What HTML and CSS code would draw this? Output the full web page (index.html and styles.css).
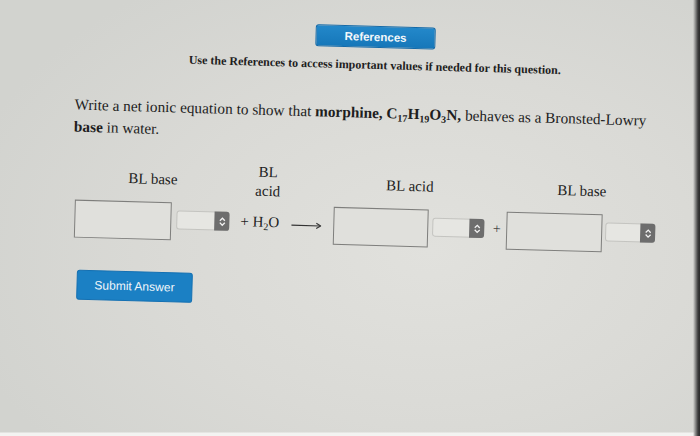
FILE: index.html
```html
<!DOCTYPE html>
<html>
<head>
<meta charset="utf-8">
<link rel="stylesheet" href="styles.css">
</head>
<body>
<div class="page">
  <div class="top">
    <button class="ref-btn">References</button>
    <p class="hint">Use the References to access important values if needed for this question.</p>
  </div>
  <p class="question">Write a net ionic equation to show that <b>morphine, C<sub>17</sub>H<sub>19</sub>O<sub>3</sub>N,</b> behaves as a Bronsted-Lowry<br><b>base</b> in water.</p>

  <div class="equation">
    <div class="col col-g1">
      <div class="label">BL base</div>
      <div class="slot">
        <span class="box box-a"></span>
        <span class="sel sel-a"><span class="step"><svg width="8" height="10" viewBox="0 0 8 10"><path d="M1.5 4 L4 1.5 L6.5 4 M1.5 6 L4 8.5 L6.5 6" fill="none" stroke="#f2f2f2" stroke-width="1.3"/></svg></span></span>
      </div>
    </div>
    <div class="col col-w">
      <div class="label">BL<br>acid</div>
      <div class="slot"><span class="txt">+ H<sub>2</sub>O</span></div>
    </div>
    <div class="col col-arrow">
      <div class="label"></div>
      <div class="slot"><svg class="arrow" width="30" height="8" viewBox="0 0 30 8"><path d="M0 4.5 H28.5" stroke="#333" stroke-width="1.1"/><path d="M25 1.8 L29.5 4.5 L25 7.2" fill="none" stroke="#333" stroke-width="1.1"/></svg></div>
    </div>
    <div class="col col-g2">
      <div class="label">BL acid</div>
      <div class="slot">
        <span class="box box-b"></span>
        <span class="sel sel-b"><span class="step"><svg width="8" height="10" viewBox="0 0 8 10"><path d="M1.5 4 L4 1.5 L6.5 4 M1.5 6 L4 8.5 L6.5 6" fill="none" stroke="#f2f2f2" stroke-width="1.3"/></svg></span></span>
      </div>
    </div>
    <div class="col col-plus">
      <div class="label"></div>
      <div class="slot"><span class="txt plus">+</span></div>
    </div>
    <div class="col col-g3">
      <div class="label">BL base</div>
      <div class="slot">
        <span class="box box-c"></span>
        <span class="sel sel-c"><span class="step"><svg width="8" height="10" viewBox="0 0 8 10"><path d="M1.5 4 L4 1.5 L6.5 4 M1.5 6 L4 8.5 L6.5 6" fill="none" stroke="#f2f2f2" stroke-width="1.3"/></svg></span></span>
      </div>
    </div>
  </div>

  <button class="submit">Submit Answer</button>
</div>
</body>
</html>
```
FILE: styles.css
```css
html, body {
  margin: 0;
  padding: 0;
  width: 700px;
  height: 436px;
  overflow: hidden;
}
body {
  background:
    linear-gradient(to right, rgba(0,0,0,0) 693px, #9a9a98 695px, #3c3c3c 698px, #2a2a2a 700px),
    linear-gradient(to bottom, rgba(0,0,0,0) 432px, #f3f3f1 433px),
    radial-gradient(ellipse 480px 320px at 430px 250px, #e1e1dd 0%, #dadad6 55%, #d2d3cf 100%);
  background-color: #d6d7d3;
  font-family: "Liberation Serif", "Times New Roman", serif;
  color: #1e1e1e;
}
.page {
  width: 700px;
  height: 436px;
  box-sizing: border-box;
  padding-top: 26px;
  transform: rotate(1.6deg);
  transform-origin: 375px 200px;
}
.top {
  display: flex;
  flex-direction: column;
  align-items: center;
  padding-left: 42px;
}
.ref-btn {
  width: 120px;
  height: 22px;
  margin: 0;
  border: 1px solid #146aa8;
  border-radius: 3px;
  background: linear-gradient(#2388ca, #1677b9);
  color: #f4f8fb;
  font-family: "Liberation Sans", Arial, sans-serif;
  font-weight: bold;
  font-size: 11.5px;
  padding: 0;
}
.hint {
  margin: 10px 0 0 0;
  font-size: 12px;
  font-weight: bold;
  line-height: 14px;
  white-space: nowrap;
}
.question {
  margin: 30px 0 0 72px;
  font-size: 15.3px;
  line-height: 22px;
}
.question sub {
  font-size: 10px;
  line-height: 0;
  vertical-align: -3px;
}
.equation {
  display: flex;
  margin: 16px 0 0 75px;
}
.col {
  display: flex;
  flex-direction: column;
  align-items: center;
}
.label {
  height: 46px;
  display: flex;
  align-items: center;
  justify-content: center;
  text-align: center;
  font-size: 15px;
  line-height: 19px;
}
.slot {
  height: 38px;
  display: flex;
  align-items: center;
}
.col-g1 { width: 155px; margin-right: 8px; }
.col-w { width: 45px; margin-right: 9px; }
.col-arrow { width: 30px; margin-right: 12px; }
.col-g2 { width: 151px; margin-right: 9px; }
.col-plus { width: 7px; margin-right: 6px; }
.col-g3 { width: 149px; }
.col-w .label { padding-left: 14px; }
.box {
  display: block;
  height: 38px;
  box-sizing: border-box;
  border: 1.5px solid #7e7e7c;
  background: #e0e0dc;
}
.box-a { width: 97px; margin-right: 5px; }
.box-b { width: 95px; margin-right: 4px; }
.box-c { width: 96px; margin-right: 3px; }
.sel {
  display: flex;
  justify-content: flex-end;
  height: 19px;
  box-sizing: border-box;
  border: 1px solid #c4c4c0;
  border-radius: 3px;
  background: #e6e6e2;
  margin-top: -3px;
}
.sel-a { width: 53px; }
.sel-b { width: 52px; }
.sel-c { width: 50px; }
.step {
  width: 15px;
  height: 19px;
  margin: -1px -1px 0 0;
  border-radius: 0 3px 3px 0;
  background: #6d6d6d;
  display: flex;
  align-items: center;
  justify-content: center;
}
.txt {
  font-size: 15px;
  white-space: nowrap;
  margin-top: -4px;
}
.txt sub {
  font-size: 10px;
  line-height: 0;
  vertical-align: -3px;
}
.plus { font-size: 14px; color: #444; margin-top: -2px; }
.arrow { display: block; margin-top: -1px; }
.submit {
  display: block;
  margin: 32px 0 0 79px;
  width: 116px;
  height: 30px;
  border: 1px solid #1470b2;
  border-radius: 3px;
  background: #1b80c4;
  color: #f1f6fa;
  font-family: "Liberation Sans", Arial, sans-serif;
  font-size: 12px;
  padding: 0;
}
```
